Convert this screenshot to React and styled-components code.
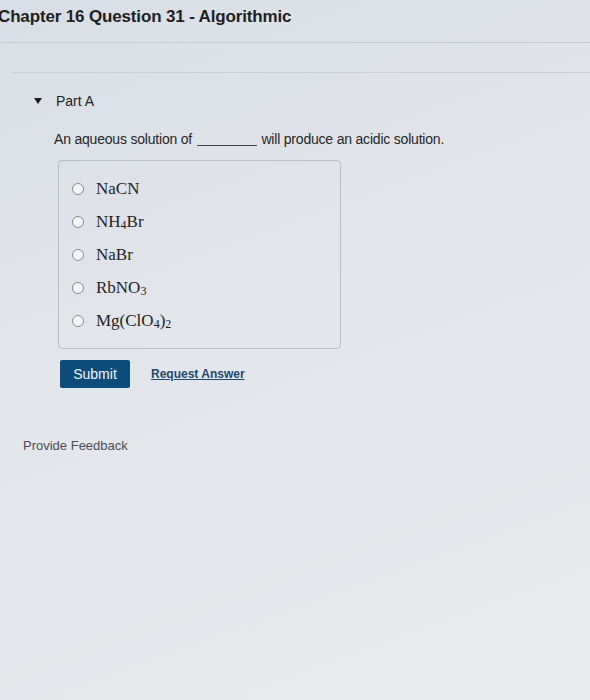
import React from 'react';
import styled, { createGlobalStyle } from 'styled-components';

const GlobalStyle = createGlobalStyle`
  html, body {
    margin: 0;
    padding: 0;
  }
  body {
    width: 590px;
    height: 700px;
    overflow: hidden;
    background: linear-gradient(160deg, #d9dee6 0%, #e2e5ea 40%, #e9ebee 100%);
    font-family: "Liberation Sans", Arial, sans-serif;
    color: #222;
  }
`;

const options = [
  { id: 'a', label: <>NaCN</> },
  { id: 'b', label: <>NH<sub>4</sub>Br</> },
  { id: 'c', label: <>NaBr</> },
  { id: 'd', label: <>RbNO<sub>3</sub></> },
  { id: 'e', label: <>Mg(ClO<sub>4</sub>)<sub>2</sub></> },
];

const App = () => {
  return (
    <Page>
      <GlobalStyle />
      <Header>
        <Title>Chapter 16 Question 31 - Algorithmic</Title>
      </Header>
      <Spacer />
      <PartSection>
        <PartHeader>
          <Caret />
          <PartTitle>Part A</PartTitle>
        </PartHeader>
        <QuestionBody>
          <Prompt>
            An aqueous solution of <Blank /> will produce an acidic solution.
          </Prompt>
          <OptionBox>
            {options.map((opt) => (
              <OptionRow key={opt.id}>
                <Radio />
                <OptionLabel>{opt.label}</OptionLabel>
              </OptionRow>
            ))}
          </OptionBox>
          <Actions>
            <SubmitButton>Submit</SubmitButton>
            <RequestLink>Request Answer</RequestLink>
          </Actions>
        </QuestionBody>
      </PartSection>
      <Feedback>Provide Feedback</Feedback>
    </Page>
  );
};

export default App;

const Page = styled.div`
  width: 590px;
  height: 700px;
`;

const Header = styled.div`
  padding: 5px 0 0 0;
  height: 37px;
  border-bottom: 1px solid #c6cad1;
`;

const Title = styled.h1`
  margin: 0 0 0 -2px;
  font-size: 17px;
  font-weight: bold;
  color: #1e1f22;
  line-height: 24px;
  letter-spacing: -0.15px;
`;

const Spacer = styled.div`
  height: 29px;
  margin-left: 12px;
  border-bottom: 1px solid #cbcfd5;
`;

const PartSection = styled.div`
  padding: 17px 0 0 12px;
`;

const PartHeader = styled.div`
  display: flex;
  align-items: center;
  gap: 14px;
  padding-left: 22px;
  height: 22px;
`;

const Caret = styled.span`
  width: 0;
  height: 0;
  border-left: 4.5px solid transparent;
  border-right: 4.5px solid transparent;
  border-top: 6px solid #1c1c1c;
`;

const PartTitle = styled.span`
  font-size: 14px;
  color: #222;
`;

const QuestionBody = styled.div`
  padding: 18px 0 0 42px;
`;

const Prompt = styled.p`
  margin: 0;
  font-size: 14px;
  color: #262626;
  line-height: 18px;
  letter-spacing: -0.2px;
`;

const Blank = styled.span`
  display: inline-block;
  width: 60px;
  border-bottom: 1px solid #444;
  vertical-align: -2px;
  margin: 0 1px;
`;

const OptionBox = styled.div`
  margin: 12px 0 0 4px;
  width: 283px;
  height: 189px;
  border: 1px solid #b9bdc4;
  border-radius: 4px;
  padding: 17px 0 0 13px;
  box-sizing: border-box;
  display: flex;
  flex-direction: column;
  gap: 12px;
`;

const OptionRow = styled.label`
  display: flex;
  align-items: center;
  gap: 12px;
  height: 21px;
`;

const Radio = styled.span`
  flex: none;
  width: 10px;
  height: 10px;
  border: 1.5px solid #868a91;
  border-radius: 50%;
  background: #f3f4f6;
`;

const OptionLabel = styled.span`
  font-family: "Liberation Serif", "Times New Roman", serif;
  font-size: 17px;
  color: #1f1f1f;

  sub {
    font-size: 12px;
    vertical-align: -2px;
    line-height: 0;
  }
`;

const Actions = styled.div`
  display: flex;
  align-items: center;
  gap: 21px;
  margin: 11px 0 0 6px;
`;

const SubmitButton = styled.button`
  width: 70px;
  height: 28px;
  border: none;
  border-radius: 2px;
  background: #0c4c7a;
  color: #f1f4f8;
  font-family: "Liberation Sans", Arial, sans-serif;
  font-size: 14px;
  padding: 0;
`;

const RequestLink = styled.a`
  font-size: 12px;
  font-weight: bold;
  color: #1d4a70;
  text-decoration: underline;
`;

const Feedback = styled.div`
  margin: 50px 0 0 23px;
  font-size: 13px;
  color: #4a4e55;
`;
